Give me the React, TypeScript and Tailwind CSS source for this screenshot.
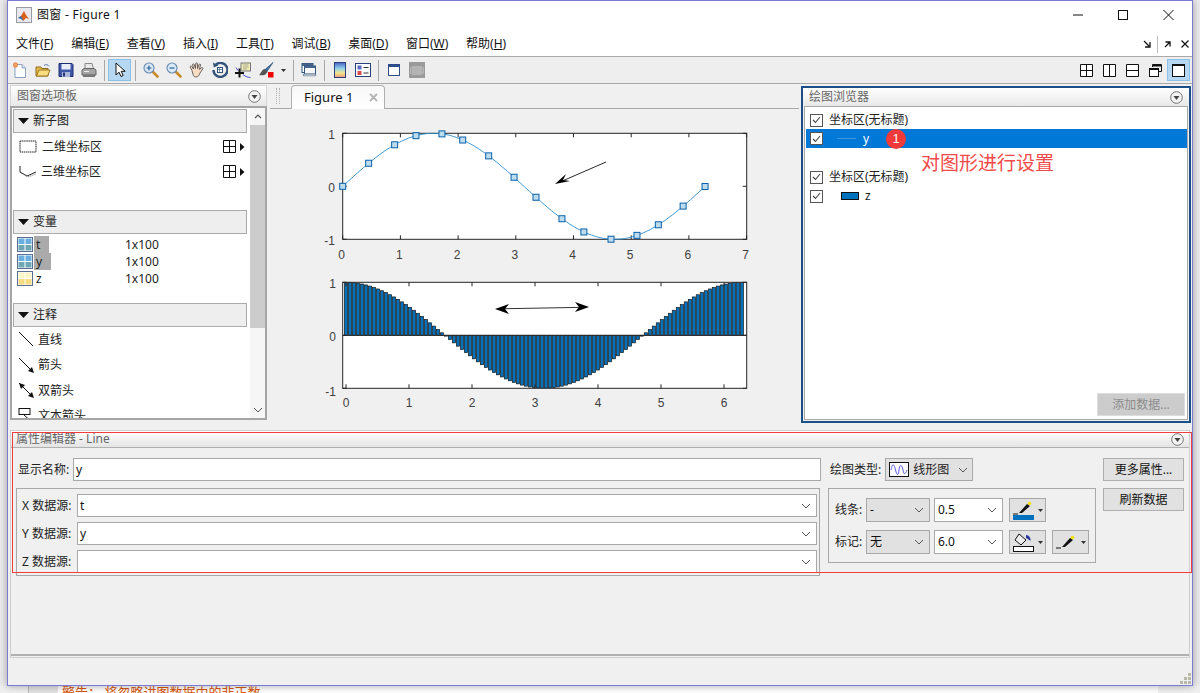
import React from "react";

const FONT = "font-['Noto_Sans','Noto_Sans_CJK_SC',sans-serif]";

function I({ children, s = 16 }: { children: React.ReactNode; s?: number }) {
  return (
    <svg width={s} height={s} viewBox="0 0 16 16" className="block">
      {children}
    </svg>
  );
}

const IconNew = () => (
  <I>
    <path d="M3 2.500h7l3.500 3.500v9.500H3z" fill="#fff" stroke="#8aa2c0" />
    <path d="M10 2.500V6h3.500" fill="#dbe6f2" stroke="#8aa2c0" />
    <circle cx="3.500" cy="3" r="2.200" fill="#f7a35c" stroke="#d9602a" strokeWidth=".6" />
  </I>
);
const IconOpen = () => (
  <I>
    <path d="M1 5h5l1 1.500h6V14H1z" fill="#e3b94c" stroke="#8d6a1a" />
    <path d="M1.500 14L4 8h11l-2.500 6z" fill="#f8dd82" stroke="#9c7a20" />
    <path d="M9 3.500c2-1.500 4-1 5 .8" stroke="#5a7ea8" fill="none" />
  </I>
);
const IconSave = () => (
  <I>
    <path d="M1 1.500h13l1 1v12H1z" fill="#3e57a8" stroke="#1f2f70" />
    <rect x="3.500" y="2" width="9" height="5.500" fill="#e8eef8" />
    <rect x="4" y="10" width="8" height="5" fill="#aab6d8" />
    <rect x="5" y="10.500" width="2" height="4" fill="#28387c" />
  </I>
);
const IconPrint = () => (
  <I>
    <path d="M4 7V1.500h7L12.500 7z" fill="#e8e8e8" stroke="#888" />
    <path d="M1 8l2-1.500h10l2 1.500v5H1z" fill="#a5a5a5" stroke="#666" />
    <rect x="2" y="12.500" width="12" height="2.500" fill="#777" />
    <rect x="3" y="9" width="5" height="1" fill="#eee" />
  </I>
);
const IconArrow = () => (
  <I>
    <path d="M4 1v12l3-2.800 2 4.300 2.200-1-2-4.200h4z" fill="#fff" stroke="#111" />
  </I>
);
const IconZoom = ({ plus }: { plus?: boolean }) => (
  <I>
    <path d="M9.500 9.500l5 5" stroke="#c98a2a" strokeWidth="2.600" strokeLinecap="round" />
    <circle cx="6" cy="6" r="5" fill="#dbeaf7" stroke="#6d8fb4" strokeWidth="1.200" />
    <path d={plus ? "M3.500 6h5M6 3.500v5" : "M3.500 6h5"} stroke="#2d5f96" strokeWidth="1.200" />
  </I>
);
const IconHand = () => (
  <I>
    <path
      d="M3 8.500L1.200 5.200c-.4-1 1-1.600 1.600-.7L4.500 7 3.600 2.800c-.2-1.100 1.300-1.400 1.600-.3L6.400 6.500 6.800 1.600c.1-1.100 1.600-1 1.600.1L8.600 6.500 10 2.500c.4-1 1.800-.6 1.500.5L10.400 7.500l2.100-1.700c.9-.7 1.900.4 1.200 1.200L11 11c-.8 2.400-1.800 4-4.500 4C4.500 15 3.800 12 3 8.500z"
      fill="#f8dcc4"
      stroke="#444"
      strokeWidth=".8"
    />
  </I>
);
const IconRotate = () => (
  <I>
    <path d="M3.500 3a7 7 0 1 1-2 5" fill="none" stroke="#33527c" strokeWidth="2.400" />
    <path d="M1 .5l.8 5 4.500-2z" fill="#33527c" />
    <rect x="5.500" y="5.500" width="5" height="5" fill="#fff" stroke="#33527c" />
    <path d="M7.500 5.500v5M5.500 7.500h5" stroke="#33527c" strokeWidth=".6" />
  </I>
);
const IconCursor = () => (
  <I>
    <rect x="6" y="1" width="9.500" height="8" fill="#f1edb5" stroke="#777" />
    <path d="M8 3h5.500M8 5h5.500M8 7h4" stroke="#888" strokeWidth=".7" />
    <path d="M4.500 6.500v9M0 11h9" stroke="#111" strokeWidth="2" />
    <path d="M8 12.500c3 2.500 5 2.800 7.500 3" stroke="#2222cc" fill="none" strokeWidth=".8" />
    <path d="M1 5.500l2 3" stroke="#2222cc" strokeWidth=".8" />
  </I>
);
const IconBrush = () => (
  <I>
    <path d="M15 .5L7 7.500l2 2z" fill="#3e6ea6" stroke="#25446c" strokeWidth=".6" />
    <path d="M7 7C3.500 7.500 3.500 11 1 13c3 .8 7.500 .5 8.500-3.500z" fill="#555" />
    <rect x="10" y="10" width="5.500" height="5.500" fill="#ee0000" />
  </I>
);
const IconLink = () => (
  <I>
    <rect x="1" y="1.500" width="11" height="9" fill="#fff" stroke="#33527c" />
    <rect x="1" y="1.500" width="11" height="2.500" fill="#46658c" />
    <rect x="3.500" y="4" width="11" height="8" fill="#f4f7fb" stroke="#33527c" />
    <rect x="3.500" y="4" width="11" height="2" fill="#46658c" />
    <path d="M3 13h5M8 13h6" stroke="#7e8fa3" strokeWidth="2.600" strokeLinecap="round" />
    <path d="M3 13h11" stroke="#e3e8ee" strokeWidth=".8" />
  </I>
);
const IconColorbar = () => (
  <svg width="12" height="16" viewBox="0 0 12 16" className="block">
    <defs>
      <linearGradient id="cbar" x1="0" y1="0" x2="0" y2="1">
        <stop offset="0" stopColor="#4a63c8" />
        <stop offset=".4" stopColor="#8fd0e8" />
        <stop offset=".7" stopColor="#f3e58c" />
        <stop offset="1" stopColor="#e99a7a" />
      </linearGradient>
    </defs>
    <rect x=".5" y=".5" width="11" height="15" fill="url(#cbar)" stroke="#29407c" />
  </svg>
);
const IconLegend = () => (
  <I>
    <rect x=".5" y="1.500" width="15" height="13" fill="#fff" stroke="#29407c" />
    <rect x="2.500" y="3.500" width="4" height="4" fill="#5a68c8" />
    <rect x="2.500" y="9" width="4" height="4" fill="#d84a4a" />
    <path d="M8.500 5.500h5M8.500 11h5" stroke="#333" />
  </I>
);
const IconWin = () => (
  <svg width="12" height="12" viewBox="0 0 12 12" className="block">
    <rect x=".5" y=".5" width="11" height="11" fill="#fff" stroke="#2f4c8c" />
    <rect x=".5" y=".5" width="11" height="2.500" fill="#2f4c8c" />
  </svg>
);
const IconWinGray = () => (
  <I>
    <rect x="0" y="0" width="16" height="16" fill="#9a9a9a" />
    <rect x="3" y="4" width="10" height="9" fill="#b4b4b4" />
    <rect x="1" y="5" width="1.500" height="7" fill="#b4b4b4" />
    <rect x="13.500" y="5" width="1.500" height="7" fill="#b4b4b4" />
  </I>
);
const Grid4 = () => (
  <svg width="13" height="13" viewBox="0 0 13 13" className="block">
    <path d="M.5.5h12v12H.5zM6.500.5v12M.5 6.500h12" fill="#fff" stroke="#111" />
  </svg>
);
const Grid2V = () => (
  <svg width="13" height="13" viewBox="0 0 13 13" className="block">
    <path d="M.5.5h12v12H.5zM6.500.5v12" fill="#fff" stroke="#111" />
  </svg>
);
const Grid2H = () => (
  <svg width="13" height="13" viewBox="0 0 13 13" className="block">
    <path d="M.5.5h12v12H.5zM.5 6.500h12" fill="#fff" stroke="#111" />
  </svg>
);
const GridFloat = () => (
  <svg width="13" height="13" viewBox="0 0 13 13" className="block">
    <path d="M3.500 3V.5h9v7H10" fill="none" stroke="#111" />
    <rect x="3.500" y="1" width="9" height="1.500" fill="#111" />
    <rect x=".5" y="4.500" width="9" height="8" fill="#fff" stroke="#111" />
    <rect x=".5" y="4.500" width="9" height="1.500" fill="#111" />
  </svg>
);
const GridOne = () => (
  <svg width="13" height="13" viewBox="0 0 13 13" className="block">
    <rect x=".5" y=".5" width="12" height="12" fill="#fff" stroke="#111" />
    <rect x=".5" y=".5" width="12" height="1.500" fill="#111" />
  </svg>
);

const Tool = ({ children, selected, extra }: { children: React.ReactNode; selected?: boolean; extra?: string }) => (
  <div
    className={`w-[23px] h-[22px] flex items-center justify-center shrink-0 ${
      selected ? "bg-[#b6d8f2] border border-[#8dc0e6]" : ""
    } ${extra ?? ""}`}
  >
    {children}
  </div>
);
const Sep = () => <div className="w-px h-[21px] bg-[#a8a8a8] mx-[3.5px] shrink-0" />;

const PanelToggle = () => (
  <svg width="13" height="13" viewBox="0 0 13 13" className="block shrink-0">
    <circle cx="6.500" cy="6.500" r="5.800" fill="#f4f4f4" stroke="#666" strokeWidth=".9" />
    <path d="M3.500 5h6L6.500 9z" fill="#444" />
  </svg>
);

const Chevron = ({ color = "#555" }: { color?: string }) => (
  <svg width="10" height="6" viewBox="0 0 10 6" className="block shrink-0">
    <path d="M1 1l4 4 4-4" fill="none" stroke={color} strokeWidth="1" />
  </svg>
);

const Check = () => (
  <div className="w-[13px] h-[13px] border border-[#555] bg-white flex items-center justify-center shrink-0">
    <svg width="9" height="8" viewBox="0 0 9 8" className="block">
      <path d="M1 4l2.500 2.500L8 1" fill="none" stroke="#444" strokeWidth="1.100" />
    </svg>
  </div>
);

const SectionHead = ({ children }: { children: React.ReactNode }) => (
  <div className="h-[24px] w-[234px] bg-[#eeeeee] border border-[#aaaaaa] flex items-center pl-[4px] gap-[4px] shrink-0">
    <svg width="11" height="6" viewBox="0 0 11 6" className="block">
      <path d="M0 0h11L5.500 6z" fill="#111" />
    </svg>
    <span className="text-[12px] text-[#222]">{children}</span>
  </div>
);

const GridRow = () => (
  <div className="flex items-center gap-[2px] ml-auto mr-[4px]">
    <Grid4 />
    <svg width="5" height="8" viewBox="0 0 5 8" className="block ml-[2px]">
      <path d="M0 0l4.500 4L0 8z" fill="#111" />
    </svg>
  </div>
);

const VarIcon = ({ yellow }: { yellow?: boolean }) => {
  const a = yellow ? "#fff6c8" : "#6aaee0";
  const b = yellow ? "#f7dc80" : "#6fa7b5";
  return (
    <svg width="16" height="15" viewBox="0 0 16 15" className="block shrink-0">
      <rect x=".5" y=".5" width="15" height="14" fill="#fff" stroke="#5b6f92" />
      <rect x="1.500" y="1.500" width="6" height="5.500" fill={a} />
      <rect x="8.500" y="1.500" width="6" height="5.500" fill={a} />
      <rect x="1.500" y="8" width="6" height="5.500" fill={b} />
      <rect x="8.500" y="8" width="6" height="5.500" fill={b} />
    </svg>
  );
};

const VarRow = ({ name, gray, wide }: { name: string; gray?: boolean; wide?: boolean }) => (
  <div className="h-[17px] flex items-center pl-[4px] shrink-0">
    <VarIcon yellow={!gray} />
    <span
      className={`h-[17px] ml-[1px] pl-[2px] leading-[17px] text-[12px] text-[#222] ${
        gray ? "bg-[#aaaaaa]" : ""
      } ${wide ? "w-[17px]" : "w-[15px]"}`}
    >
      {name}
    </span>
    <span className={`text-[12px] text-[#222] ${wide ? "ml-[74px]" : "ml-[76px]"}`}>1x100</span>
  </div>
);

const AnnotIcon = ({ kind }: { kind: "line" | "arrow" | "double" | "text" }) => (
  <svg width="17" height="17" viewBox="0 0 17 17" className="block shrink-0">
    {kind === "text" ? (
      <>
        <rect x="1" y=".5" width="11" height="6" fill="#fff" stroke="#111" />
        <path d="M6 7l8 7" stroke="#111" />
        <path d="M16 16l-5-1.500 3-3z" fill="#111" />
      </>
    ) : (
      <>
        <path d="M1 1l14 14" stroke="#111" />
        {kind !== "line" && <path d="M16 16l-6-2 4-4z" fill="#111" />}
        {kind === "double" && <path d="M1 1l6 2-4 4z" fill="#111" />}
      </>
    )}
  </svg>
);

const AnnotRow = ({ kind, label }: { kind: "line" | "arrow" | "double" | "text"; label: string }) => (
  <div className="h-[25.5px] flex items-center pl-[5px] gap-[3px] shrink-0">
    <AnnotIcon kind={kind} />
    <span className="text-[12px] text-[#222]">{label}</span>
  </div>
);

const LeftPanel = () => (
  <div className="w-[257px] h-[335px] ml-[2px] mt-[1px] flex flex-col shrink-0">
    <div className="h-[21px] shrink-0 flex items-center justify-between pl-[6px] pr-[5px] bg-gradient-to-b from-white to-[#e8e8e8] border border-[#d5d5d5] border-b-0">
      <span className="text-[12px] text-[#666]">图窗选项板</span>
      <PanelToggle />
    </div>
    <div className="flex-1 border-2 border-[#a5a5a5] bg-white flex overflow-hidden">
      <div className="flex-1 flex flex-col pl-px pt-px overflow-hidden">
        <SectionHead>新子图</SectionHead>
        <div className="h-[25px] mt-[1px] flex items-center pl-[6px] pr-[1px] gap-[5px] shrink-0">
          <svg width="18" height="14" viewBox="0 0 18 14" className="block">
            <rect x="1" y="1" width="16" height="11" fill="none" stroke="#222" strokeDasharray="1.500 .6" />
          </svg>
          <span className="text-[12px] text-[#222]">二维坐标区</span>
          <GridRow />
        </div>
        <div className="h-[25px] flex items-center pl-[6px] pr-[1px] gap-[4px] shrink-0">
          <svg width="18" height="14" viewBox="0 0 18 14" className="block">
            <path d="M1 1v6l7 4 9-4" fill="none" stroke="#222" />
            <path d="M2 8l7 4 8-3" fill="none" stroke="#777" strokeDasharray="1 1" />
          </svg>
          <span className="text-[12px] text-[#222]">三维坐标区</span>
          <GridRow />
        </div>
        <div className="h-[26px] shrink-0" />
        <SectionHead>变量</SectionHead>
        <div className="h-[2px] shrink-0" />
        <VarRow name="t" gray />
        <VarRow name="y" gray wide />
        <VarRow name="z" />
        <div className="h-[16px] shrink-0" />
        <SectionHead>注释</SectionHead>
        <AnnotRow kind="line" label="直线" />
        <AnnotRow kind="arrow" label="箭头" />
        <AnnotRow kind="double" label="双箭头" />
        <AnnotRow kind="text" label="文本箭头" />
      </div>
      <div className="w-[15px] shrink-0 flex flex-col bg-[#f6f6f6]">
        <div className="h-[17px] flex items-center justify-center">
          <svg width="8" height="5" viewBox="0 0 8 5" className="block">
            <path d="M1 4l3-3 3 3" fill="none" stroke="#555" strokeWidth="1.200" />
          </svg>
        </div>
        <div className="h-[203px] bg-[#cccccc]" />
        <div className="flex-1" />
        <div className="h-[17px] flex items-center justify-center">
          <Chevron />
        </div>
      </div>
    </div>
  </div>
);

const sx1 = (v: number) => 342.7 + 57.7 * v;
const sy1 = (v: number) => 186.3 - 53 * v;
const markers = [0, 0.45, 0.9, 1.27, 1.72, 2.08, 2.53, 2.97, 3.35, 3.8, 4.18, 4.65, 5.1, 5.47, 5.9, 6.28];

const ChartTop = () => {
  const pts: string[] = [];
  for (let i = 0; i < 100; i++) {
    const t = (i * 2 * Math.PI) / 99;
    pts.push(`${sx1(t).toFixed(1)},${sy1(Math.sin(t)).toFixed(1)}`);
  }
  return (
    <svg width="530" height="140" viewBox="270 122 530 140" className="block bg-transparent">
      <rect x="342.700" y="133.300" width="404" height="106" fill="#fff" stroke="#262626" />
      {[0, 1, 2, 3, 4, 5, 6, 7].map((k) => (
        <g key={k}>
          <path d={`M${sx1(k)} 239.300v-4M${sx1(k)} 133.300v4`} stroke="#262626" />
          <text x={sx1(k) - 1} y="259" fontSize="12" fontFamily="Liberation Sans" fill="#404040" textAnchor="middle">
            {k}
          </text>
        </g>
      ))}
      {[
        [1, "1", 139],
        [0, "0", 192],
        [-1, "-1", 245],
      ].map(([v, l, y]) => (
        <g key={String(l)}>
          <path d={`M342.700 ${sy1(v as number)}h4M746.700 ${sy1(v as number)}h-4`} stroke="#262626" />
          <text x="335" y={y as number} fontSize="12" fontFamily="Liberation Sans" fill="#404040" textAnchor="end">
            {l}
          </text>
        </g>
      ))}
      <polyline points={pts.join(" ")} fill="none" stroke="#2a8fd0" strokeWidth=".9" />
      {markers.map((m) => (
        <rect
          key={m}
          x={sx1(m) - 3}
          y={sy1(Math.sin(m)) - 3}
          width="6"
          height="6"
          fill="#bcdcf0"
          stroke="#0a60a8"
          strokeWidth="1"
        />
      ))}
      <path d="M606 162L560 182" stroke="#111" strokeWidth=".9" />
      <path d="M555 184L566 174L563 180L570 181z" fill="#000" />
    </svg>
  );
};

const ChartBottom = () => {
  const sx = (v: number) => 346 + 63 * v;
  const sy = (v: number) => 335.3 - 53 * v;
  const bars = [];
  for (let i = 0; i < 100; i++) {
    const t = (i * 2 * Math.PI) / 99;
    const v = Math.cos(t);
    const y0 = Math.min(sy(0), sy(v));
    bars.push(
      <rect key={i} x={sx(t) - 1.6} y={y0} width="3.200" height={Math.abs(sy(v) - sy(0))} fill="#0072bd" stroke="#1a1a1a" strokeWidth=".7" />
    );
  }
  return (
    <svg width="530" height="142" viewBox="270 272 530 142" className="block">
      <defs>
        <clipPath id="ax2">
          <rect x="342.700" y="282.300" width="404" height="106" />
        </clipPath>
      </defs>
      <rect x="342.700" y="282.300" width="404" height="106" fill="#fff" />
      <g clipPath="url(#ax2)">{bars}</g>
      <rect x="342.700" y="282.300" width="404" height="106" fill="none" stroke="#262626" />
      <path d="M342.700 335.300h404" stroke="#262626" />
      {[0, 1, 2, 3, 4, 5, 6].map((k) => (
        <g key={k}>
          <path d={`M${sx(k)} 388.300v-4M${sx(k)} 282.300v4`} stroke="#262626" />
          <text x={sx(k)} y="407" fontSize="12" fontFamily="Liberation Sans" fill="#404040" textAnchor="middle">
            {k}
          </text>
        </g>
      ))}
      {[
        [1, "1", 288],
        [0, "0", 341],
        [-1, "-1", 396],
      ].map(([v, l, y]) => (
        <g key={String(l)}>
          <path d={`M342.700 ${sy(v as number)}h4M746.700 ${sy(v as number)}h-4`} stroke="#262626" />
          <text x="336" y={y as number} fontSize="12" fontFamily="Liberation Sans" fill="#404040" textAnchor="end">
            {l}
          </text>
        </g>
      ))}
      <path d="M500 308.800L584 307.300" stroke="#333" strokeWidth="1" />
      <path d="M495 309L509 304L505 309L509 314z" fill="#000" />
      <path d="M589 307L575 302L579 307L575 312z" fill="#000" />
    </svg>
  );
};

const CenterPanel = () => (
  <div className="w-[532px] ml-[3px] h-[345px] flex flex-col shrink-0">
    <div className="h-[25px] shrink-0 flex items-end relative">
      <div className="absolute left-0 right-[3px] bottom-0 h-px bg-[#a8a8a8]" />
      <div className="w-[4px] h-[16px] ml-[6px] mb-[5px] mr-[11px] border-x border-dotted border-[#b0b0b0]" />
      <div className="relative h-[24px] w-[94px] bg-white border border-[#b0b0b0] border-b-0 rounded-t-[4px] flex items-center pl-[12px] pr-[6px] justify-between bg-gradient-to-b from-[#f8f8f8] to-white">
        <span className="text-[13px] text-[#111]">Figure 1</span>
        <svg width="9" height="9" viewBox="0 0 9 9" className="block">
          <path d="M1 1l7 7M8 1l-7 7" stroke="#b5b5b5" strokeWidth="1.800" />
        </svg>
      </div>
    </div>
    <div className="mt-[13px]">
      <ChartTop />
    </div>
    <div className="mt-[10px]">
      <ChartBottom />
    </div>
  </div>
);

const RightPanel = () => (
  <div className="relative w-[390px] h-[337px] mt-[2px] -ml-px border-2 border-[#1b4f87] flex flex-col shrink-0">
    <div className="h-[18px] shrink-0 flex items-center justify-between pl-[6px] pr-[6px] bg-gradient-to-b from-white to-[#e8e8e8]">
      <span className="text-[12px] text-[#666]">绘图浏览器</span>
      <PanelToggle />
    </div>
    <div className="flex-1 mx-px mb-px border border-[#a8a8a8] bg-white flex flex-col pt-[4px] px-px">
      <div className="h-[18px] flex items-center pl-[4px] gap-[6px]">
        <Check />
        <span className="text-[12px] text-[#222]">坐标区(无标题)</span>
      </div>
      <div className="h-[19px] flex items-center pl-[4px] bg-[#0078d7] w-[381px]">
        <Check />
        <div className="w-[19px] h-px bg-[#3a96e0] ml-[14px]" />
        <span className="text-[12px] text-white ml-[7px]">y</span>
      </div>
      <div className="h-[19px]" />
      <div className="h-[18px] flex items-center pl-[4px] gap-[6px] mt-[1px]">
        <Check />
        <span className="text-[12px] text-[#222]">坐标区(无标题)</span>
      </div>
      <div className="h-[20px] flex items-center pl-[4px]">
        <Check />
        <div className="w-[18px] h-[8px] bg-[#0072bd] border border-[#111] ml-[18px]" />
        <span className="text-[12px] text-[#222] ml-[6px]">z</span>
      </div>
      <div className="flex-1" />
      <div className="flex justify-end pr-px pb-[3px]">
        <div className="w-[88px] h-[23px] bg-[#cccccc] border border-[#dddddd] flex items-center justify-center text-[12px] text-[#8c8c8c]">
          添加数据...
        </div>
      </div>
    </div>
    <div className="absolute left-[83px] top-[41px] w-[20px] h-[20px] rounded-full bg-[#f03a3a] text-white text-[12px] flex items-center justify-center font-['Liberation_Sans',sans-serif]">
      1
    </div>
    <div className="absolute left-[118px] top-[62px] text-[19px] leading-[26px] text-[#f24a4a] whitespace-nowrap">
      对图形进行设置
    </div>
  </div>
);

const Field = ({ value, w, chevron }: { value: string; w?: string; chevron?: boolean }) => (
  <div
    className={`h-[23px] bg-white border border-[#a8a8a8] flex items-center pl-[2px] pr-[5px] text-[12px] text-[#111] ${w ?? "flex-1"}`}
  >
    <span className="flex-1">{value}</span>
    {chevron && <Chevron />}
  </div>
);

const DataRow = ({ label, value, mt }: { label: string; value: string; mt?: string }) => (
  <div className={`flex items-center h-[23px] ${mt ?? ""}`}>
    <span className="w-[59px] pl-[4px] text-[12px] text-[#222] shrink-0 whitespace-nowrap">{label}</span>
    <Field value={value} chevron />
  </div>
);

const Combo = ({ value, gray, w }: { value: string; gray?: boolean; w: string }) => (
  <div
    className={`h-[24px] ${w} border border-[#a8a8a8] flex items-center pl-[3px] pr-[5px] text-[12px] text-[#111] shrink-0 ${
      gray ? "bg-[#e1e1e1]" : "bg-white"
    }`}
  >
    <span className="flex-1">{value}</span>
    <Chevron />
  </div>
);

const DropTri = () => (
  <svg width="5" height="3" viewBox="0 0 5 3" className="block shrink-0">
    <path d="M0 0h5L2.500 3z" fill="#333" />
  </svg>
);

const PenIcon = () => (
  <svg width="22" height="14" viewBox="0 0 22 14" className="block">
    <path d="M7 12L15 3l3 2-8 7z" fill="#111" />
    <circle cx="17.500" cy="2.500" r="1.800" fill="#f2e000" />
    <path d="M1 13h5" stroke="#111" />
  </svg>
);

const SquareBtn = ({ children, w }: { children: React.ReactNode; w: string }) => (
  <div className={`h-[24px] ${w} bg-[#e1e1e1] border border-[#a8a8a8] flex items-center justify-center gap-[4px] shrink-0`}>
    {children}
  </div>
);

const RightBtn = ({ children }: { children: React.ReactNode }) => (
  <div className="w-[81px] h-[23px] bg-[#e1e1e1] border border-[#aeaeae] flex items-center justify-center text-[12px] text-[#111]">
    {children}
  </div>
);

const PropEditor = () => (
  <div className="mx-[2px] w-[1180px] h-[228px] border border-[#cfcfcf] flex flex-col shrink-0">
    <div className="h-[17px] shrink-0 flex items-center justify-between pl-[5px] pr-[5px] bg-gradient-to-b from-white to-[#e4e4e4] border-b border-[#b0b0b0]">
      <span className="text-[12px] text-[#666]">属性编辑器 - Line</span>
      <PanelToggle />
    </div>
    <div className="flex-1 border-b-2 border-[#b0b0b0] mb-px flex pl-[5px] pt-[10px] pr-[6px]">
      <div className="w-[805px] shrink-0">
        <div className="flex items-center h-[23px]">
          <span className="text-[12px] text-[#222] pl-[2px] w-[57px] shrink-0 whitespace-nowrap">显示名称:</span>
          <Field value="y" />
        </div>
        <div className="mt-[7px] w-[804px] h-[88px] border border-[#a8a8a8] px-px pt-[5px] pr-[2px]">
          <DataRow label="X 数据源:" value="t" />
          <DataRow label="Y 数据源:" value="y" mt="mt-[5px]" />
          <DataRow label="Z 数据源:" value="" mt="mt-[5px]" />
        </div>
      </div>
      <div className="w-[269px] ml-[7px] shrink-0">
        <div className="flex items-center h-[23px] pl-[2px]">
          <span className="text-[12px] text-[#222] whitespace-nowrap">绘图类型:</span>
          <div className="ml-[4px] w-[88px] h-[23px] bg-[#e1e1e1] border border-[#a8a8a8] flex items-center pl-[3px] pr-[4px]">
            <svg width="20" height="15" viewBox="0 0 20 15" className="block shrink-0">
              <rect x=".5" y=".5" width="19" height="14" fill="#fff" stroke="#111" />
              <path d="M2 8c1.500-8 3-6 4.500 0s3 6 3.500 0 3-6 4 0 2.500 4 4 0" fill="none" stroke="#4a4ae0" strokeWidth=".9" />
            </svg>
            <span className="ml-[4px] text-[12px] text-[#222] flex-1">线形图</span>
            <Chevron />
          </div>
        </div>
        <div className="mt-[7px] w-[268px] h-[75px] border border-[#a8a8a8] pl-[6px] pt-[9px] flex flex-col gap-[8px]">
          <div className="flex items-center">
            <span className="text-[12px] text-[#222] w-[31px] shrink-0">线条:</span>
            <Combo value="-" gray w="w-[64px]" />
            <Combo value="0.5" w="w-[69px] ml-[4px]" />
            <SquareBtn w="w-[37px] ml-[6px]">
              <div className="flex flex-col items-center">
                <PenIcon />
                <div className="w-[21px] h-[5px] bg-[#0072bd]" />
              </div>
              <DropTri />
            </SquareBtn>
          </div>
          <div className="flex items-center">
            <span className="text-[12px] text-[#222] w-[31px] shrink-0">标记:</span>
            <Combo value="无" gray w="w-[64px]" />
            <Combo value="6.0" w="w-[69px] ml-[4px]" />
            <SquareBtn w="w-[37px] ml-[6px]">
              <svg width="21" height="20" viewBox="0 0 21 20" className="block">
                <path d="M6 2l7 6-5 5-6-5z" fill="#eee" stroke="#111" />
                <path d="M13 3c3 0 5 3 4.500 6-1-1-3-2-4.500-3z" fill="#2a3a9c" />
                <rect x=".5" y="14.500" width="20" height="5" fill="#fff" stroke="#111" />
              </svg>
              <DropTri />
            </SquareBtn>
            <SquareBtn w="w-[37px] ml-[6px]">
              <PenIcon />
              <DropTri />
            </SquareBtn>
          </div>
        </div>
      </div>
      <div className="ml-[6px] flex flex-col gap-[7px] shrink-0">
        <RightBtn>更多属性...</RightBtn>
        <RightBtn>刷新数据</RightBtn>
      </div>
    </div>
  </div>
);

const MENU: [string, string][] = [
  ["文件", "F"],
  ["编辑", "E"],
  ["查看", "V"],
  ["插入", "I"],
  ["工具", "T"],
  ["调试", "B"],
  ["桌面", "D"],
  ["窗口", "W"],
  ["帮助", "H"],
];

export default function App() {
  return (
    <div className={`w-[1200px] h-[693px] overflow-hidden bg-[#ececec] flex flex-col ${FONT}`}>
      <div className="relative ml-[7px] w-[1186px] h-[686px] shrink-0 border border-[#7b7bd6] bg-[#f0f0f0] flex flex-col shadow-[0_0_8px_rgba(0,0,0,0.35)]">
        <div className="h-[27px] bg-white flex items-center shrink-0 pl-[8px]">
          <svg width="16" height="16" viewBox="0 0 16 16" className="block">
            <rect x=".5" y=".5" width="15" height="15" fill="#e8e8ee" stroke="#9a9aa2" />
            <path d="M2 11l3-2 3-5 2 4 3 4-3-1-3 3-2-3z" fill="#d9601a" />
            <path d="M2 11l3-2 2 4 1 1-3-2z" fill="#2f6fb3" />
          </svg>
          <span className="ml-[5px] text-[12px] text-[#111] tracking-[0.3px]">图窗 - Figure 1</span>
          <div className="ml-auto flex items-center mr-[4px]">
            <svg width="45" height="12" viewBox="0 0 45 12" className="block">
              <path d="M0 6h10" stroke="#111" />
            </svg>
            <svg width="45" height="12" viewBox="0 0 45 12" className="block">
              <rect x=".5" y="1.500" width="9" height="9" fill="none" stroke="#111" />
            </svg>
            <svg width="11" height="12" viewBox="0 0 11 12" className="block mr-[14px]">
              <path d="M.5 1l10 10M10.500 1l-10 10" stroke="#111" />
            </svg>
          </div>
        </div>
        <div className="h-[29px] pt-[4px] bg-white border-b border-[#a8a8a8] flex items-center shrink-0 pl-[8px] gap-[17.7px]">
          {MENU.map(([n, k]) => (
            <span key={k} className="text-[12px] text-[#111] whitespace-nowrap">
              {n}(<span className="underline">{k}</span>)
            </span>
          ))}
          <div className="ml-auto flex items-center mr-[3px]">
            <svg width="8" height="8" viewBox="0 0 8 8" className="block">
              <path d="M1 1l5 5M7 2v5H2" fill="none" stroke="#111" strokeWidth="1.300" />
            </svg>
            <div className="w-px h-[17px] bg-[#bbbbbb] mx-[6px]" />
            <svg width="7" height="7" viewBox="0 0 7 7" className="block">
              <path d="M1 6l5-5M1.500 1H6v4.500" fill="none" stroke="#111" strokeWidth="1.300" />
            </svg>
            <svg width="8" height="8" viewBox="0 0 8 8" className="block ml-[10px]">
              <path d="M.5.5l7 7M7.500.5l-7 7" stroke="#111" strokeWidth="1.200" />
            </svg>
          </div>
        </div>
        <div className="h-[27px] bg-[#eeeeee] border-b border-[#a8a8a8] flex items-center shrink-0 pr-[2px]">
          <Tool><IconNew /></Tool>
          <Tool><IconOpen /></Tool>
          <Tool><IconSave /></Tool>
          <Tool><IconPrint /></Tool>
          <Sep />
          <Tool selected><IconArrow /></Tool>
          <Sep />
          <Tool><IconZoom plus /></Tool>
          <Tool><IconZoom /></Tool>
          <Tool><IconHand /></Tool>
          <Tool><IconRotate /></Tool>
          <Tool><IconCursor /></Tool>
          <Tool><IconBrush /></Tool>
          <div className="w-[12px] flex justify-center shrink-0"><DropTri /></div>
          <Sep />
          <Tool><IconLink /></Tool>
          <Sep />
          <Tool><IconColorbar /></Tool>
          <Tool><IconLegend /></Tool>
          <Sep />
          <Tool><IconWin /></Tool>
          <Tool><IconWinGray /></Tool>
          <div className="ml-auto flex items-center gap-[10px]">
            <Grid4 />
            <Grid2V />
            <Grid2H />
            <GridFloat />
            <Tool selected extra="-ml-[5px]"><GridOne /></Tool>
          </div>
        </div>
        <div className="h-[346px] flex shrink-0">
          <LeftPanel />
          <CenterPanel />
          <RightPanel />
        </div>
        <PropEditor />
        <div className="absolute left-[4px] top-[431px] w-[1180px] h-[141px] border border-[#f33c3c]" />
        <div className="absolute right-px bottom-px grid grid-cols-3 gap-px w-[11px]">
          {[0, 0, 1, 0, 1, 1, 1, 1, 1].map((v, i) => (
            <div key={i} className={`w-[3px] h-[3px] ${v ? "bg-[#b8b8a8]" : ""}`} />
          ))}
        </div>
      </div>
      <div className="h-[7px] shrink-0 flex overflow-hidden">
        <div className="w-[29px] bg-[#f0f0f0] border-r border-[#bbbbbb]" />
        <div className="w-[29px] bg-[#e4e4e4]" />
        <div className="flex-1 bg-white pl-[4px] text-[13px] leading-[18px] text-[#d9580c] whitespace-nowrap">
          <div className="-mt-[3px]">警告： 将忽略讲图数据中的非正数。</div>
        </div>
        <div className="w-[42px] bg-[#f0f0f0]" />
      </div>
    </div>
  );
}
